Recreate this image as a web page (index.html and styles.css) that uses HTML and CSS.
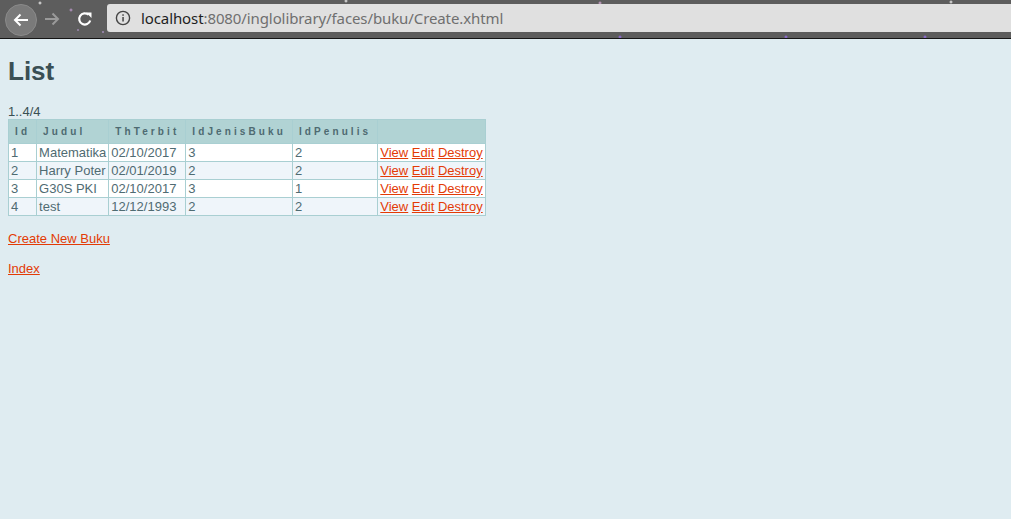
FILE: index.html
```html
<!DOCTYPE html>
<html>
<head>
<meta charset="utf-8">
<title>List</title>
<link rel="stylesheet" href="styles.css">
</head>
<body>
<div class="chrome">
  <div class="nav">
    <span class="btn back">
      <svg width="32" height="32" viewBox="0 0 32 32"><circle cx="16" cy="16" r="15.5" fill="#7a7a7a" stroke="#8a8a8a"/><path d="M23 16H10M15.5 10.5L10 16l5.5 5.5" fill="none" stroke="#fff" stroke-width="2"/></svg>
    </span>
    <span class="btn fwd">
      <svg width="20" height="20" viewBox="0 0 20 20"><path d="M3 10h13M10.5 4.5L16 10l-5.5 5.5" fill="none" stroke="#9a9a9a" stroke-width="2"/></svg>
    </span>
    <span class="btn reload">
      <svg width="20" height="20" viewBox="0 0 20 20"><path d="M15.2 11.5A5.6 5.6 0 1 1 13.6 5.8" fill="none" stroke="#fff" stroke-width="2.2"/><path d="M11 3.5h5.5V9z" fill="#fff"/></svg>
    </span>
  </div>
  <div class="omnibox">
    <svg class="info" width="16" height="16" viewBox="0 0 16 16"><circle cx="8" cy="8" r="6.6" fill="none" stroke="#444" stroke-width="1.4"/><rect x="7.3" y="7" width="1.5" height="4.5" fill="#444"/><rect x="7.3" y="4.3" width="1.5" height="1.5" fill="#444"/></svg>
    <span class="url"><span class="host">localhost</span>:8080/inglolibrary/faces/buku/Create.xhtml</span>
  </div>
</div>
<div class="page">
  <h1>List</h1>
  <form class="jsfcrud_list_form">
    <span>1..4/4</span>
    <table class="grid">
      <thead>
        <tr><th>Id</th><th>Judul</th><th>ThTerbit</th><th>IdJenisBuku</th><th>IdPenulis</th><th class="blank"></th></tr>
      </thead>
      <tbody>
        <tr class="odd"><td>1</td><td>Matematika</td><td>02/10/2017</td><td>3</td><td>2</td><td><a href="#">View</a> <a href="#">Edit</a> <a href="#">Destroy</a></td></tr>
        <tr class="even"><td>2</td><td>Harry Poter</td><td>02/01/2019</td><td>2</td><td>2</td><td><a href="#">View</a> <a href="#">Edit</a> <a href="#">Destroy</a></td></tr>
        <tr class="odd"><td>3</td><td>G30S PKI</td><td>02/10/2017</td><td>3</td><td>1</td><td><a href="#">View</a> <a href="#">Edit</a> <a href="#">Destroy</a></td></tr>
        <tr class="even"><td>4</td><td>test</td><td>12/12/1993</td><td>2</td><td>2</td><td><a href="#">View</a> <a href="#">Edit</a> <a href="#">Destroy</a></td></tr>
      </tbody>
    </table>
    <br>
    <a href="#">Create New Buku</a>
    <br><br>
    <a href="#">Index</a>
  </form>
</div>
</body>
</html>
```

FILE: styles.css
```css
html, body {
  margin: 0;
  padding: 0;
}
body {
  font-family: "Liberation Sans", Arial, Helvetica, sans-serif;
  font-size: 13px;
  color: #3a4f54;
  background-color: #dfecf1;
}
.chrome {
  height: 38px;
  border-bottom: 1px solid #151515;
  background-color: #5d5d5d;
  background-image:
    radial-gradient(circle at 40px 3px, #ffffff 0, rgba(255,255,255,0) 2px),
    radial-gradient(circle at 71px 10px, #c9a0d8 0, rgba(200,160,220,0) 2px),
    radial-gradient(circle at 78px 30px, #b69ad0 0, rgba(180,150,210,0) 1.5px),
    radial-gradient(circle at 103px 32px, #c0a0e0 0, rgba(180,150,210,0) 1.5px),
    radial-gradient(circle at 346px 1px, #ffffff 0, rgba(255,255,255,0) 2px),
    radial-gradient(circle at 600px 3px, #e0b0e0 0, rgba(255,255,255,0) 2px),
    radial-gradient(circle at 951px 2px, #ffffff 0, rgba(255,255,255,0) 2px),
    radial-gradient(circle at 620px 37px, #a070ff 0, rgba(160,112,255,0) 2px),
    radial-gradient(circle at 786px 37px, #a070ff 0, rgba(160,112,255,0) 2px),
    radial-gradient(circle at 925px 37px, #a070ff 0, rgba(160,112,255,0) 2px);
  display: flex;
  align-items: flex-start;
}
.nav {
  display: flex;
  align-items: center;
  height: 38px;
  padding-left: 5px;
  width: 102px;
  box-sizing: border-box;
}
.btn {
  display: flex;
  align-items: center;
  justify-content: center;
}
.back {
  width: 32px;
  height: 32px;
  margin-top: 1px;
}
.fwd {
  width: 20px;
  height: 20px;
  margin-left: 5px;
}
.reload {
  width: 20px;
  height: 20px;
  margin-left: 13px;
}
.omnibox {
  flex: 1;
  margin-top: 4px;
  height: 28px;
  margin-left: 5px;
  background: #e0e0e0;
  border-radius: 3px 0 0 3px;
  display: flex;
  align-items: center;
  padding-left: 8px;
}
.info {
  margin-right: 10px;
  flex: none;
}
.url {
  font-family: "Noto Sans", "DejaVu Sans", sans-serif;
  font-size: 15px;
  color: #6f6f6f;
  letter-spacing: -0.1px;
}
.host {
  color: #1e1e1e;
}
.page {
  padding: 0 8px;
}
h1 {
  font-size: 26px;
  font-weight: bold;
  color: #3a4f54;
  margin: 17px 0 17px;
}
form {
  margin: 0;
}
a {
  color: #e33b06;
}
.grid {
  border: 1px solid #a9cfd2;
  border-collapse: collapse;
  border-spacing: 0;
  empty-cells: show;
}
.grid th,
.grid td {
  border: 1px solid #a9cfd2;
}
.grid th {
  font-size: 10px;
  font-weight: bold;
  color: #4e6a71;
  letter-spacing: 3.1px;
  text-align: left;
  padding: 6px 6px 6px 6px;
  background: #b1d3d4;
}
.grid td {
  padding: 1px 2px;
  color: #4f6b72;
  font-size: 13px;
  white-space: nowrap;
}
.grid tr.odd td {
  background: #ffffff;
}
.grid tr.even td {
  background: #eff5fa;
}
```
